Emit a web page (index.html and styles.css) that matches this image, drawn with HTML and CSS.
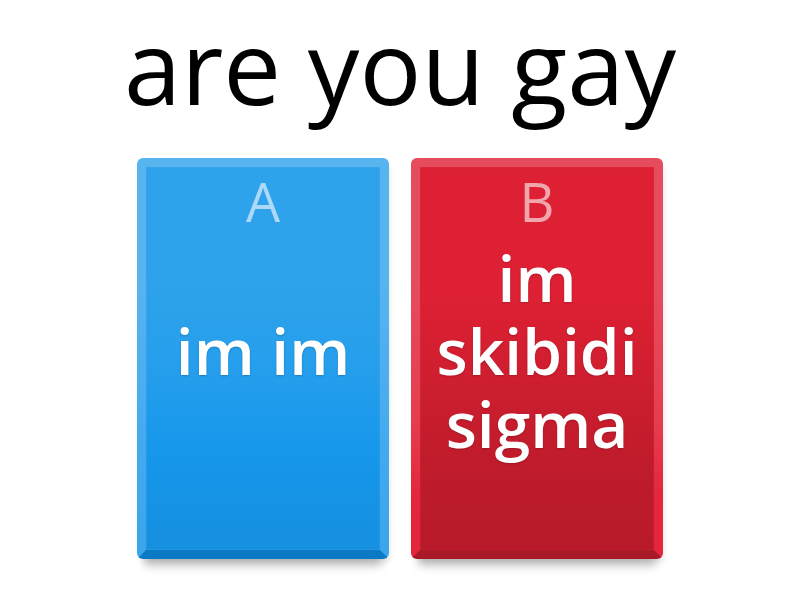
FILE: index.html
```html
<!DOCTYPE html>
<html lang="en">
<head>
<meta charset="utf-8">
<title>Quiz</title>
<link rel="stylesheet" href="styles.css">
</head>
<body>
<main class="quiz">
  <h1 class="question">are you gay</h1>
  <div class="answers">
    <button class="answer answer-blue" type="button">
      <span class="letter">A</span>
      <span class="label">im im</span>
    </button>
    <button class="answer answer-red" type="button">
      <span class="letter">B</span>
      <span class="label">im skibidi sigma</span>
    </button>
  </div>
</main>
</body>
</html>
```

FILE: styles.css
```css
* {
  box-sizing: border-box;
}

body {
  margin: 0;
  background: #fff;
  font-family: "Open Sans", "Noto Sans", sans-serif;
}

.quiz {
  display: flex;
  flex-direction: column;
  min-height: 100vh;
  padding-bottom: 41px;
}

.question {
  margin: 0;
  padding-bottom: 28px;
  color: #000;
  font-size: 103px;
  font-weight: 400;
  line-height: 130px;
  text-align: center;
}

.answers {
  flex: 1;
  display: grid;
  grid-template-columns: 1fr 1fr;
  gap: 22px;
  width: 65.75%;
  margin: 0 auto;
}

.answer {
  display: grid;
  grid-template-rows: 74px 1fr 90px;
  justify-items: center;
  margin: 0;
  padding: 0 12px;
  border: 9px solid transparent;
  border-radius: 6px;
  color: #fff;
  font-family: inherit;
  text-align: center;
  cursor: pointer;
}

/* The face fills the padding box; the lit bevels show through the transparent borders. */
.answer-blue {
  border-bottom-color: rgba(0, 110, 185, 0.8);
  background:
    linear-gradient(#2ea2eb 30%, #279fec 50%, #1697eb 75%, #168fdf) padding-box,
    linear-gradient(#58b4ef 30%, #42a9ee 75%, #3aa5ec) border-box;
  box-shadow:
    inset 0 0 2px rgba(100, 190, 245, 0.5),
    0 15px 9px -8px rgba(0, 0, 0, 0.22),
    3px 6px 6px -3px rgba(0, 0, 0, 0.12);
}

.answer-red {
  border-bottom-color: rgba(155, 22, 34, 0.8);
  background:
    linear-gradient(#dd2033 35%, #cc1e2f 58%, #bd1b2b 82%, #b91a29) padding-box,
    linear-gradient(#e54c5e 30%, #e63d50 65%, #e3263c 85%) border-box;
  box-shadow:
    inset 0 0 2px rgba(235, 70, 90, 0.5),
    0 15px 9px -8px rgba(0, 0, 0, 0.22),
    3px 6px 6px -3px rgba(0, 0, 0, 0.12);
}

.letter {
  font-size: 54px;
  line-height: 68px;
  opacity: 0.6;
}

.label {
  align-self: center;
  font-size: 64px;
  font-weight: 600;
  line-height: 73px;
  text-shadow: 0 1px 2px rgba(0, 0, 0, 0.2);
}
```
